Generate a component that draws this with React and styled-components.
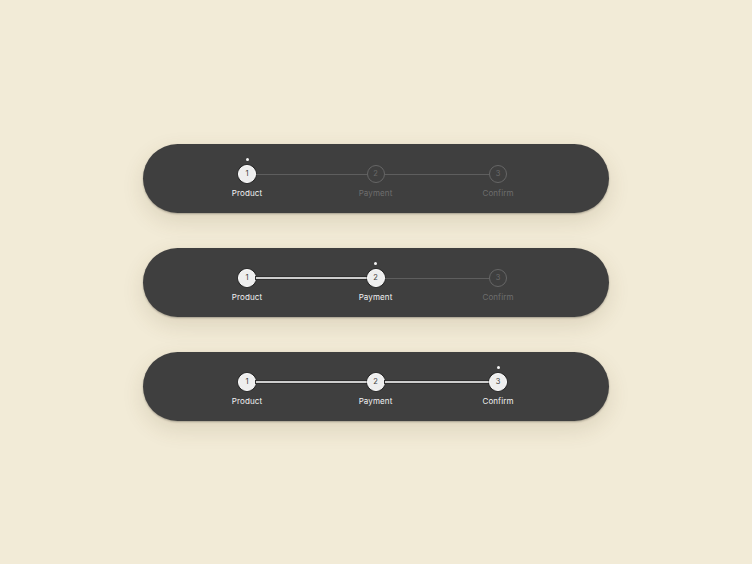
import React from "react";
import styled, { createGlobalStyle } from "styled-components";

const Global = createGlobalStyle`
  html, body { margin: 0; padding: 0; }
  body {
    background: #f2ebd7;
    font-family: Inter, "Open Sans", sans-serif;
  }
`;

const Page = styled.main`
  width: 752px;
  height: 564px;
  display: flex;
  flex-direction: column;
  align-items: center;
  justify-content: center;
  gap: 35px;
`;

const Card = styled.section`
  width: 466px;
  height: 69px;
  box-sizing: border-box;
  padding: 0 102px 0 95px;
  border-radius: 35px;
  background: #3f3f3f;
  display: flex;
  align-items: center;
  box-shadow: 0 1px 2px rgba(0, 0, 0, 0.28), 0 8px 22px rgba(90, 70, 30, 0.14);
`;

const Track = styled.ol`
  list-style: none;
  margin: 0;
  padding: 0;
  flex: 1;
  display: flex;
  align-items: flex-start;
`;

const Step = styled.li`
  width: 18px;
  display: flex;
  flex-direction: column;
  align-items: center;
`;

const Marker = styled.span`
  width: 3px;
  height: 3px;
  border-radius: 50%;
  background: #f4f4f4;
  margin-bottom: 4px;
  visibility: ${(p) => (p.$show ? "visible" : "hidden")};
`;

const Circle = styled.span`
  width: 18px;
  height: 18px;
  box-sizing: border-box;
  border-radius: 50%;
  display: flex;
  align-items: center;
  justify-content: center;
  font-size: 7.5px;
  line-height: 1;
  background: ${(p) => (p.$done ? "#eeeeee" : "transparent")};
  color: ${(p) => (p.$done ? "#3a3a3a" : "#6a6a6a")};
  border: ${(p) => (p.$done ? "1.5px solid #ffffff" : "1px solid #666666")};
  box-shadow: ${(p) => (p.$done ? "0 0 0 1px rgba(0,0,0,0.25)" : "none")};
`;

const Label = styled.span`
  margin-top: 5px;
  white-space: nowrap;
  font-size: 8px;
  font-weight: 400;
  line-height: 10px;
  letter-spacing: 0.1px;
  color: ${(p) => (p.$done ? "#f2f2f2" : "#6e6e6e")};
`;

const Connector = styled.li`
  flex: ${(p) => p.$grow};
  height: ${(p) => (p.$done ? "2px" : "1px")};
  margin-top: ${(p) => (p.$done ? "15px" : "15.5px")};
  background: ${(p) => (p.$done ? "#cdcdcd" : "#5e5e5e")};
  box-shadow: ${(p) => (p.$done ? "0 0 0 1px #2f2f2f" : "none")};
`;

const steps = ["Product", "Payment", "Confirm"];
const spans = [129, 122];

function Stepper({ current }) {
  const items = [];
  steps.forEach((name, i) => {
    const done = i <= current;
    items.push(
      <Step key={name}>
        <Marker $show={i === current} />
        <Circle $done={done}>{i + 1}</Circle>
        <Label $done={done}>{name}</Label>
      </Step>
    );
    if (i < steps.length - 1) {
      items.push(<Connector key={`c${i}`} $grow={spans[i]} $done={i + 1 <= current} />);
    }
  });
  return (
    <Card>
      <Track>{items}</Track>
    </Card>
  );
}

export default function App() {
  return (
    <>
      <Global />
      <Page>
        <Stepper current={0} />
        <Stepper current={1} />
        <Stepper current={2} />
      </Page>
    </>
  );
}
